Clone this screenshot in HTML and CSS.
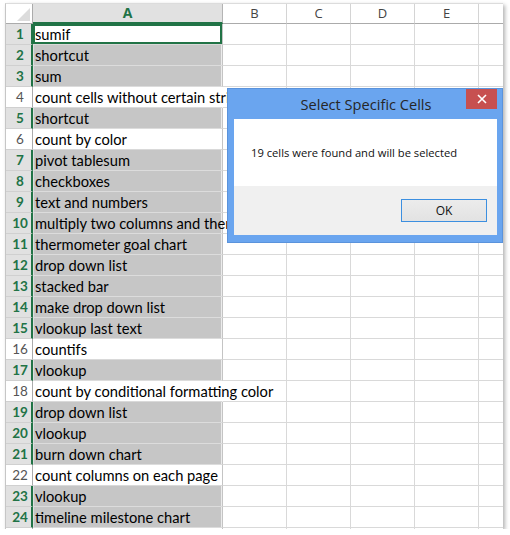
FILE: index.html
```html
<!DOCTYPE html>
<html>
<head>
<meta charset="utf-8">
<link rel="stylesheet" href="styles.css">
</head>
<body>
<div class="sheet">
  <div class="grid">
    <div class="corner"><svg class="tri" width="13" height="13" viewBox="0 0 13 13"><polygon points="13,0 13,13 0,13" fill="#dcdcdc"/></svg></div>
    <div class="ch chsel">A</div><div class="ch">B</div><div class="ch">C</div><div class="ch">D</div><div class="ch">E</div><div class="ch"></div>

    <div class="rh s">1</div><div class="c a active">sumif</div><div class="c"></div><div class="c"></div><div class="c"></div><div class="c"></div><div class="c"></div>
    <div class="rh s">2</div><div class="c a s">shortcut</div><div class="c"></div><div class="c"></div><div class="c"></div><div class="c"></div><div class="c"></div>
    <div class="rh s">3</div><div class="c a s">sum</div><div class="c"></div><div class="c"></div><div class="c"></div><div class="c"></div><div class="c"></div>
    <div class="rh">4</div><div class="c a ov">count cells without certain string</div><div class="c"></div><div class="c"></div><div class="c"></div><div class="c"></div><div class="c"></div>
    <div class="rh s">5</div><div class="c a s">shortcut</div><div class="c"></div><div class="c"></div><div class="c"></div><div class="c"></div><div class="c"></div>
    <div class="rh">6</div><div class="c a">count by color</div><div class="c"></div><div class="c"></div><div class="c"></div><div class="c"></div><div class="c"></div>
    <div class="rh s">7</div><div class="c a s">pivot tablesum</div><div class="c"></div><div class="c"></div><div class="c"></div><div class="c"></div><div class="c"></div>
    <div class="rh s">8</div><div class="c a s">checkboxes</div><div class="c"></div><div class="c"></div><div class="c"></div><div class="c"></div><div class="c"></div>
    <div class="rh s">9</div><div class="c a s">text and numbers</div><div class="c"></div><div class="c"></div><div class="c"></div><div class="c"></div><div class="c"></div>
    <div class="rh s">10</div><div class="c a s ov">multiply two columns and then sum</div><div class="c"></div><div class="c"></div><div class="c"></div><div class="c"></div><div class="c"></div>
    <div class="rh s">11</div><div class="c a s">thermometer goal chart</div><div class="c"></div><div class="c"></div><div class="c"></div><div class="c"></div><div class="c"></div>
    <div class="rh s">12</div><div class="c a s">drop down list</div><div class="c"></div><div class="c"></div><div class="c"></div><div class="c"></div><div class="c"></div>
    <div class="rh s">13</div><div class="c a s">stacked bar</div><div class="c"></div><div class="c"></div><div class="c"></div><div class="c"></div><div class="c"></div>
    <div class="rh s">14</div><div class="c a s">make drop down list</div><div class="c"></div><div class="c"></div><div class="c"></div><div class="c"></div><div class="c"></div>
    <div class="rh s">15</div><div class="c a s">vlookup last text</div><div class="c"></div><div class="c"></div><div class="c"></div><div class="c"></div><div class="c"></div>
    <div class="rh">16</div><div class="c a">countifs</div><div class="c"></div><div class="c"></div><div class="c"></div><div class="c"></div><div class="c"></div>
    <div class="rh s">17</div><div class="c a s">vlookup</div><div class="c"></div><div class="c"></div><div class="c"></div><div class="c"></div><div class="c"></div>
    <div class="rh">18</div><div class="c a ov">count by conditional formatting color</div><div class="c"></div><div class="c"></div><div class="c"></div><div class="c"></div><div class="c"></div>
    <div class="rh s">19</div><div class="c a s">drop down list</div><div class="c"></div><div class="c"></div><div class="c"></div><div class="c"></div><div class="c"></div>
    <div class="rh s">20</div><div class="c a s">vlookup</div><div class="c"></div><div class="c"></div><div class="c"></div><div class="c"></div><div class="c"></div>
    <div class="rh s">21</div><div class="c a s">burn down chart</div><div class="c"></div><div class="c"></div><div class="c"></div><div class="c"></div><div class="c"></div>
    <div class="rh">22</div><div class="c a">count columns on each page</div><div class="c"></div><div class="c"></div><div class="c"></div><div class="c"></div><div class="c"></div>
    <div class="rh s">23</div><div class="c a s">vlookup</div><div class="c"></div><div class="c"></div><div class="c"></div><div class="c"></div><div class="c"></div>
    <div class="rh s">24</div><div class="c a s">timeline milestone chart</div><div class="c"></div><div class="c"></div><div class="c"></div><div class="c"></div><div class="c"></div>
    <div class="rh"></div><div class="c a"></div><div class="c"></div><div class="c"></div><div class="c"></div><div class="c"></div><div class="c"></div>
  </div>

  <div class="dlg">
    <div class="dlg-title">
      <span class="dlg-caption">Select Specific Cells</span>
      <div class="dlg-close"><svg width="10" height="10" viewBox="0 0 10 10"><path d="M1 1 L9 9 M9 1 L1 9" stroke="#fff" stroke-width="1.6" fill="none"/></svg></div>
    </div>
    <div class="dlg-body">19 cells were found and will be selected</div>
    <div class="dlg-foot"><div class="btn">OK</div></div>
  </div>
</div>
</body>
</html>
```
FILE: styles.css
```css
html, body {
  margin: 0;
  padding: 0;
  background: #fff;
}

.sheet {
  position: relative;
  margin: 3px 0 0 5px;
  width: 498px;
  height: 526px;
  box-sizing: border-box;
  border-left: 1px solid #c6c6c6;
  border-top: 1px solid #dcdcdc;
  overflow: hidden;
  background: #fff;
  box-shadow: 2px 2px 4px rgba(0, 0, 0, 0.3);
}

.grid {
  display: grid;
  grid-template-columns: 27px 190px 64px 64px 64px 64px 40px;
  grid-template-rows: 20px;
  grid-auto-rows: 21px;
  font-family: "Lato", "DejaVu Sans", sans-serif;
}

.grid > div {
  box-sizing: border-box;
  border-right: 1px solid #d9d9d9;
  border-bottom: 1px solid #d9d9d9;
}

.corner {
  position: relative;
  background: #fff;
  border-right-color: #ababab !important;
  border-bottom-color: #ababab !important;
}

.tri {
  position: absolute;
  right: 2px;
  bottom: 2px;
}

.ch {
  background: #fff;
  color: #444;
  font-family: "Open Sans", sans-serif;
  font-size: 13px;
  line-height: 19px;
  text-align: center;
  border-bottom-color: #ababab !important;
  border-right-color: #d4d4d4 !important;
}

.chsel {
  background: #e1e1e1;
  color: #217346;
  font-weight: bold;
  font-size: 14px;
  border-bottom: 2px solid #217346 !important;
  border-right-color: #b4b4b4 !important;
  line-height: 18px;
}

.rh {
  background: #fff;
  color: #555;
  font-size: 13.5px;
  line-height: 21px;
  text-align: center;
  padding-left: 2px;
  border-right-color: #ababab !important;
  border-bottom-color: #d0d0d0 !important;
}

.rh.s {
  background: #e1e1e1;
  color: #217346;
  font-weight: bold;
  border-right: 2px solid #217346 !important;
  padding-left: 3px;
}

.c {
  background: transparent;
}

.a {
  font-size: 14.7px;
  line-height: 21px;
  padding-left: 2px;
  white-space: nowrap;
  overflow: visible;
  color: #000;
  border-right-color: #c4c4c4 !important;
}

.a.s {
  background: #c6c6c6;
  border-bottom-color: #dcdcdc !important;
  box-shadow: inset 1px 0 0 #dedede, inset -1px 0 0 #ececec;
}

.a.ov {
  border-right-color: transparent !important;
}

.active {
  background: #fff;
  box-shadow: inset 0 0 0 2px #217346;
}

/* dialog */
.dlg {
  position: absolute;
  left: 221px;
  top: 84px;
  width: 276px;
  height: 155px;
  box-sizing: border-box;
  background: #6aa5ef;
  border: 1px solid #5a93dc;
  padding: 0 5px 7px 6px;
  display: flex;
  flex-direction: column;
  font-family: "Open Sans", sans-serif;
  z-index: 5;
}

.dlg-title {
  position: relative;
  height: 30px;
  flex: none;
  text-align: center;
}

.dlg-caption {
  font-size: 14.6px;
  line-height: 30px;
  color: #262626;
  padding-left: 1px;
}

.dlg-close {
  position: absolute;
  right: 0;
  top: 0;
  width: 31px;
  height: 20px;
  background: #c75050;
  display: flex;
  align-items: center;
  justify-content: center;
}

.dlg-body {
  height: 67px;
  flex: none;
  box-sizing: border-box;
  background: #fff;
  padding: 26px 0 0 17px;
  font-size: 11.2px;
  line-height: 16px;
  color: #111;
}

.dlg-foot {
  flex: 1;
  background: #f0f0f0;
  display: flex;
  justify-content: flex-end;
  align-items: flex-start;
  padding: 13px 10px 0 0;
}

.btn {
  width: 86px;
  height: 23px;
  box-sizing: border-box;
  border: 1px solid #3c8fe0;
  background: linear-gradient(#ececec, #e2e2e2);
  font-size: 12px;
  line-height: 21px;
  text-align: center;
  color: #111;
}
```
